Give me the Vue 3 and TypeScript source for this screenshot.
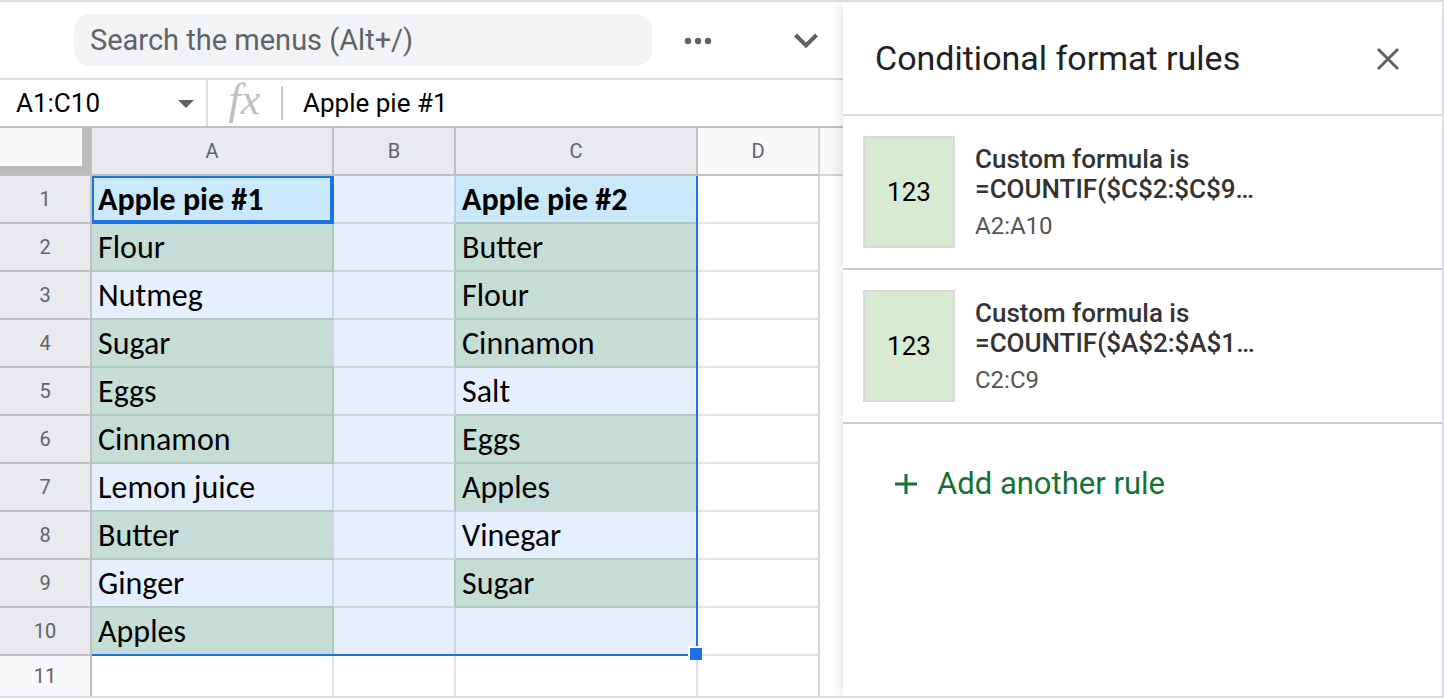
<script setup lang="ts">
import { ref } from 'vue'

interface Row {
  a: string
  c: string
  aMatch?: boolean
  cMatch?: boolean
  plainRight?: boolean
  plainBottom?: boolean
}

interface Rule {
  formula: string
  range: string
}

const search = ref('')
const reference = ref('A1:C10')
const formula = ref('Apple pie #1')

const columns = ['A', 'B', 'C', 'D']

const rows: Row[] = [
  { a: 'Apple pie #1', c: 'Apple pie #2' },
  { a: 'Flour', c: 'Butter', aMatch: true, cMatch: true },
  { a: 'Nutmeg', c: 'Flour', cMatch: true },
  { a: 'Sugar', c: 'Cinnamon', aMatch: true, cMatch: true, plainRight: true },
  { a: 'Eggs', c: 'Salt', aMatch: true },
  { a: 'Cinnamon', c: 'Eggs', aMatch: true, cMatch: true },
  { a: 'Lemon juice', c: 'Apples', cMatch: true, plainBottom: true },
  { a: 'Butter', c: 'Vinegar', aMatch: true, plainRight: true },
  { a: 'Ginger', c: 'Sugar', cMatch: true },
  { a: 'Apples', c: '', aMatch: true },
]

const rules: Rule[] = [
  { formula: '=COUNTIF($C$2:$C$9…', range: 'A2:A10' },
  { formula: '=COUNTIF($A$2:$A$1…', range: 'C2:C9' },
]

const aClass = (i: number) => ({
  match: rows[i].aMatch,
  heading: i === 0,
  'match-right': rows[i].aMatch && !rows[i].plainRight,
  'match-bottom': rows[i].aMatch || rows[i + 1]?.aMatch,
})
const bClass = (i: number) => ({
  'match-right': rows[i].cMatch,
  'heading-right': i === 0,
})
const cClass = (i: number) => ({
  match: rows[i].cMatch,
  heading: i === 0,
  'match-bottom': (rows[i].cMatch || rows[i + 1]?.cMatch) && !rows[i].plainBottom,
})
</script>

<template>
  <div class="app">
    <main class="sheet">
      <div class="toolbar">
        <input v-model="search" class="search" type="text" aria-label="Search the menus" placeholder="Search the menus (Alt+/)" />
        <button class="icon-button more" type="button" aria-label="More">
          <svg width="28" height="8" viewBox="0 0 28 8"><g fill="#5f6368"><circle cx="4" cy="4" r="3.2" /><circle cx="14" cy="4" r="3.2" /><circle cx="24" cy="4" r="3.2" /></g></svg>
        </button>
        <button class="icon-button collapse" type="button" aria-label="Hide the menus">
          <svg width="26" height="16" viewBox="0 0 26 16"><path d="M2.5 2 13 12.5 23.5 2" fill="none" stroke="#5f6368" stroke-width="4" /></svg>
        </button>
      </div>

      <div class="formula-bar">
        <input v-model="reference" class="reference" type="text" aria-label="Name box" />
        <button class="icon-button names" type="button" aria-label="Named ranges">
          <svg width="16" height="8" viewBox="0 0 16 8"><path d="M0 0H16L8 8Z" fill="#5f6368" /></svg>
        </button>
        <span class="fx">fx</span>
        <input v-model="formula" class="formula" type="text" aria-label="Formula" />
      </div>

      <div class="grid">
        <table>
          <colgroup>
            <col class="col-head" />
            <col class="col-wide" />
            <col class="col-narrow" />
            <col class="col-wide" />
            <col class="col-narrow" />
            <col />
          </colgroup>
          <thead>
            <tr>
              <td class="corner"></td>
              <th v-for="name in columns" :key="name" scope="col" :class="{ picked: name !== 'D', last: name === 'D' }">{{ name }}</th>
              <td class="spare-head"></td>
            </tr>
          </thead>
          <tbody>
            <tr v-for="(row, i) in rows" :key="i">
              <th scope="row" class="picked">{{ i + 1 }}</th>
              <td class="selected" :class="aClass(i)">{{ row.a }}<span v-if="i === 0" class="active-cell"></span></td>
              <td class="selected" :class="bClass(i)"></td>
              <td class="selected edge-right" :class="cClass(i)">{{ row.c }}<span v-if="i === 9" class="handle"></span></td>
              <td class="last"></td>
              <td class="spare"></td>
            </tr>
            <tr class="bottom-row">
              <th scope="row">11</th>
              <td></td>
              <td></td>
              <td></td>
              <td class="last"></td>
              <td class="spare"></td>
            </tr>
          </tbody>
        </table>
      </div>
    </main>

    <aside class="panel">
      <header class="panel-head">
        <h1>Conditional format rules</h1>
        <button class="icon-button close" type="button" aria-label="Close">
          <svg width="24" height="24" viewBox="0 0 24 24"><path d="M2 2 22 22M22 2 2 22" fill="none" stroke="#5f6368" stroke-width="3" /></svg>
        </button>
      </header>
      <ul class="rules">
        <li v-for="rule in rules" :key="rule.range" class="rule">
          <span class="sample">123</span>
          <div>
            <p class="condition">Custom formula is<br />{{ rule.formula }}</p>
            <p class="range">{{ rule.range }}</p>
          </div>
        </li>
      </ul>
      <button class="add" type="button">
        <svg width="22" height="22" viewBox="0 0 22 22"><path d="M11 1V21M0 11H22" stroke="#137333" stroke-width="3" /></svg>
        Add another rule
      </button>
    </aside>
  </div>
</template>

<style>
body {
  margin: 0;
  background: #fff;
}
</style>

<style scoped>
.app {
  box-sizing: border-box;
  display: flex;
  min-height: 100vh;
  border: solid #dadce0;
  border-width: 2px 2px 2px 0;
  font-family: Roboto, "Liberation Sans", sans-serif;
  color: #000;
  overflow: hidden;
}

input,
button {
  box-sizing: border-box;
  padding: 0;
  border: 0;
  outline: 0;
  background: none;
  font: inherit;
  color: inherit;
}

.icon-button {
  display: grid;
  place-items: center;
  flex: none;
}

svg {
  display: block;
}

.sheet {
  flex: 1;
  min-width: 0;
}

.toolbar {
  display: flex;
  align-items: center;
  height: 76px;
  padding: 0 24px 0 74px;
  border-bottom: 2px solid #dadce0;
}

.search {
  flex: 1;
  min-width: 0;
  height: 52px;
  padding: 0 16px;
  border-radius: 16px;
  background: #f1f3f4;
  font-size: 29px;
  color: #5f6368;
}

.search::placeholder {
  color: #5f6368;
  opacity: 1;
}

.more,
.collapse,
.names,
.close {
  padding-top: 2px;
}

.more {
  margin: 0 81px 0 32px;
}

.formula-bar {
  display: flex;
  align-items: center;
  height: 46px;
  border-bottom: 2px solid #c0c0c0;
  font-size: 26px;
}

.reference {
  flex: none;
  width: 166px;
  padding-left: 16px;
}

.names {
  width: 42px;
  height: 46px;
  border-right: 2px solid #dadce0;
}

.fx {
  flex: none;
  width: 73px;
  border-right: 2px solid #c8c8c8;
  font: italic 44px/28px "Liberation Serif", serif;
  padding-bottom: 6px;
  color: #c0c0c0;
  text-align: center;
}

.formula {
  flex: 1;
  min-width: 0;
  padding-left: 20px;
}

.grid {
  overflow: hidden;
}

table {
  width: 100%;
  table-layout: fixed;
  border-spacing: 0;
}

.col-head {
  width: 92px;
}

.col-wide {
  width: 242px;
}

.col-narrow {
  width: 122px;
}

th,
td {
  box-sizing: border-box;
  height: 48px;
  padding: 0;
  border: solid #e2e2e2;
  border-width: 0 2px 2px 0;
}

th {
  border-color: #c0c0c0;
  background: #f8f9fa;
  font-size: 20px;
  font-weight: 400;
  line-height: 24px;
  color: #5f6368;
}

th.picked {
  background: #e8eaed;
}

td {
  position: relative;
  padding: 2px 0 0 6px;
  font-family: Carlito, "Open Sans", sans-serif;
  font-size: 32px;
  line-height: 40px;
  white-space: nowrap;
}

.corner {
  border-color: #c0c0c0;
  background: #f8f9fa;
  box-shadow: inset -8px -8px #bcbcbc;
}

.last {
  border-right-color: #d5d5d5;
}

.spare-head {
  border-right: 0;
  border-color: #d5d5d5;
  background: #f8f8f8;
}

.spare {
  border: 0;
}

.selected {
  border-color: #cbd5e4;
  background: #e6f0fd;
}

.heading {
  background: #cbe8fa;
  font-weight: 700;
}

.heading-right {
  border-right-color: #b3d0e2;
}

.match {
  background: #c6ddd5;
}

.match-right {
  border-right-color: #b0c8c0;
}

.match-bottom {
  border-bottom-color: #b0c8c0;
}

/* Outline of the selected range, laid over the gridlines */
.edge-right::before {
  content: "";
  position: absolute;
  inset: 0 -2px -2px auto;
  width: 2px;
  background: #1a73e8;
}

tr:nth-child(10) .selected::after {
  content: "";
  position: absolute;
  inset: auto -2px -2px 0;
  height: 2px;
  background: #1a73e8;
}

.active-cell {
  position: absolute;
  inset: 0 -2px -2px 0;
  border: solid #1a73e8;
  border-width: 2px 4px 4px 2px;
}

.handle {
  position: absolute;
  right: -6px;
  bottom: -6px;
  z-index: 1;
  width: 12px;
  height: 12px;
  border: solid #fff;
  border-width: 2px 0 0 2px;
  background: #1a73e8;
}

.bottom-row > * {
  height: 40px;
  border-bottom: 0;
}

.bottom-row > td {
  padding: 0;
}

.panel {
  position: relative;
  flex: 0 0 599px;
  background: #fff;
  box-shadow: 0 0 14px rgba(0, 0, 0, 0.14);
}

.panel-head {
  display: flex;
  align-items: center;
  justify-content: space-between;
  height: 112px;
  padding: 0 42px 0 32px;
  border-bottom: 2px solid #dadce0;
}

h1 {
  margin: 0;
  font-size: 34px;
  font-weight: 400;
  color: #202124;
}

.rules {
  margin: 0;
  padding: 0;
  list-style: none;
}

.rule {
  display: flex;
  gap: 20px;
  padding: 20px;
  border-bottom: 2px solid #ccc;
}

.sample {
  box-sizing: border-box;
  display: grid;
  place-items: center;
  width: 92px;
  height: 112px;
  border: 2px solid #d9d9d9;
  background: #d9ead3;
  font-size: 26px;
}

.condition,
.range {
  margin: 0;
}

.condition {
  padding-top: 8px;
  font-size: 26px;
  font-weight: 500;
  line-height: 30px;
  color: #333;
}

.range {
  padding-top: 8px;
  font-size: 24px;
  line-height: 28px;
  color: #555;
}

.add {
  display: flex;
  align-items: center;
  gap: 20px;
  margin: 40px 0 0 52px;
  font-size: 31px;
  line-height: 40px;
  color: #137333;
}
</style>
